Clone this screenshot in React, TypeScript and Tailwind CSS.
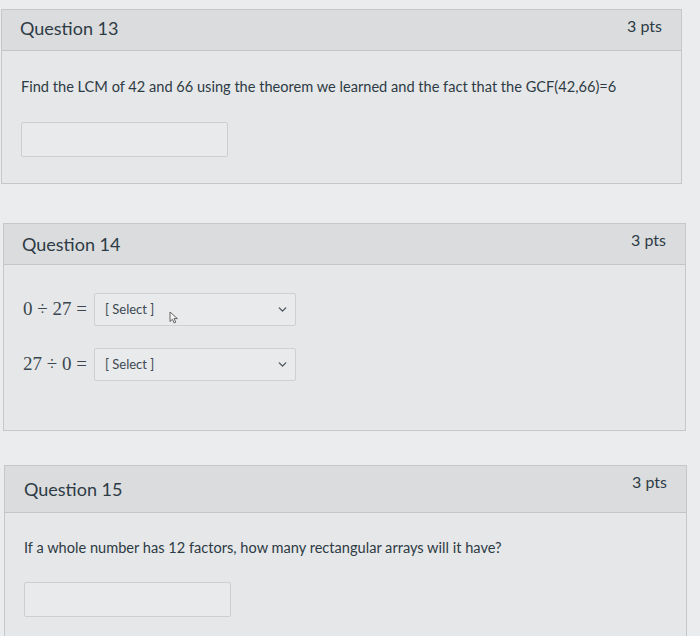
import React from 'react';
import { ChevronDown } from 'lucide-react';

const font = { fontFamily: 'Lato, "Open Sans", sans-serif' };
const mathFont = { fontFamily: '"Liberation Serif", "DejaVu Serif", serif' };

interface CardProps {
  title: string;
  points: string;
  className: string;
  headerClass: string;
  titleClass?: string;
  pointsClass: string;
  children: React.ReactNode;
}

const QuestionCard: React.FC<CardProps> = ({ title, points, className, headerClass, titleClass, pointsClass, children }) => (
  <div className={`border border-[#c6c7c8] bg-[#e6e7e8] ${className}`}>
    <div className={`flex items-center justify-between border-b border-[#c4c5c6] bg-[#dbdcdd] ${headerClass}`}>
      <span className={`text-[18px] text-[#2d3b45] ${titleClass ?? ''}`}>{title}</span>
      <span className={`text-[16px] text-[#2d3b45] pr-[19px] ${pointsClass}`}>{points}</span>
    </div>
    {children}
  </div>
);

const SelectBox: React.FC<{ cursor?: boolean }> = ({ cursor }) => (
  <div className="relative flex items-center justify-between w-[202px] h-[33px] border border-[#cfd0d1] bg-[#e9eaeb] rounded-[2px] pl-[10px] pr-[6px]">
    <span className="text-[13px] text-[#3b4852]">[ Select ]</span>
    <ChevronDown size={13} strokeWidth={2.5} className="text-[#4a5560]" />
    {cursor && (
      <svg className="absolute left-[74px] top-[17px]" width="10" height="13" viewBox="0 0 10 13">
        <path d="M1 1 L1 10.5 L3.4 8.3 L5.2 12 L6.8 11.2 L5 7.6 L8.4 7.6 Z" fill="#f4f4f4" stroke="#555" strokeWidth="0.9" strokeLinejoin="round" />
      </svg>
    )}
  </div>
);

const AnswerBox: React.FC = () => (
  <div className="w-[207px] h-[35px] border border-[#cdcecf] bg-[#e9eaeb] rounded-[2px]" />
);

const App: React.FC = () => {
  return (
    <div className="h-[636px] w-[700px] overflow-hidden bg-[#ebeced] pt-[9px]" style={font}>
      {/* Question 13 */}
      <QuestionCard
        title="Question 13"
        points="3 pts"
        className="ml-[1px] w-[681px]"
        headerClass="h-[41px] pl-[18px]"
        titleClass="-translate-y-[2px]"
        pointsClass="-translate-y-[4px]"
      >
        <div className="h-[132px] pl-[19px] pt-[28px]">
          <p className="text-[14.6px] leading-[16px] text-[#2d3b45]">
            Find the LCM of 42 and 66 using the theorem we learned and the fact that the GCF(42,66)=6
          </p>
          <div className="mt-[27px]">
            <AnswerBox />
          </div>
        </div>
      </QuestionCard>

      {/* Question 14 */}
      <QuestionCard
        title="Question 14"
        points="3 pts"
        className="mt-[39px] ml-[3px] w-[683px]"
        headerClass="h-[41px] pl-[18px]"
        pointsClass="-translate-y-[4px]"
      >
        <div className="h-[165px] pl-[19px] pt-[28px] flex flex-col gap-[22px]">
          <div className="flex items-center">
            <span className="text-[19px] text-[#3b4852] w-[71px]" style={mathFont}>0 ÷ 27 =</span>
            <SelectBox cursor />
          </div>
          <div className="flex items-center">
            <span className="text-[19px] text-[#3b4852] w-[71px]" style={mathFont}>27 ÷ 0 =</span>
            <SelectBox />
          </div>
        </div>
      </QuestionCard>

      {/* Question 15 */}
      <QuestionCard
        title="Question 15"
        points="3 pts"
        className="mt-[34px] ml-[4px] w-[683px]"
        headerClass="h-[47px] pl-[19px]"
        pointsClass="-translate-y-[7px]"
      >
        <div className="h-[160px] pl-[19px] pt-[27px]">
          <p className="text-[14.6px] leading-[16px] text-[#2d3b45]">
            If a whole number has 12 factors, how many rectangular arrays will it have?
          </p>
          <div className="mt-[26px]">
            <AnswerBox />
          </div>
        </div>
      </QuestionCard>
    </div>
  );
};

export default App;
